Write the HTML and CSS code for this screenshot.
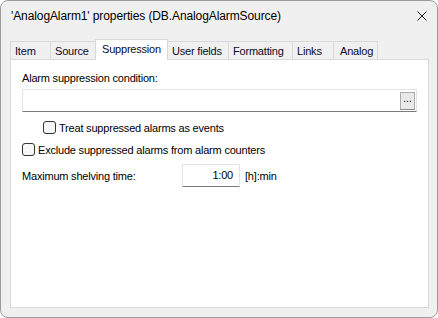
FILE: index.html
```html
<!DOCTYPE html>
<html lang="en">
<head>
  <meta charset="UTF-8" />
  <title>'AnalogAlarm1' properties</title>
  <link rel="stylesheet" href="styles.css">
</head>
<body>
  <div class="window" role="dialog" aria-label="'AnalogAlarm1' properties">

    <!-- Title bar -->
    <div class="titlebar">
      <span class="title">'AnalogAlarm1' properties (DB.AnalogAlarmSource)</span>
      <svg class="close" width="10" height="10" viewBox="0 0 10 10" aria-label="Close">
        <path d="M0.5 0.5 L9.5 9.5 M9.5 0.5 L0.5 9.5" stroke="#1a1a1a" stroke-width="1" fill="none"/>
      </svg>
    </div>

    <!-- Tabs -->
    <div class="tabs">
      <div class="tab tab-item">Item</div>
      <div class="tab tab-source">Source</div>
      <div class="tab active">Suppression</div>
      <div class="tab tab-user">User fields</div>
      <div class="tab tab-format">Formatting</div>
      <div class="tab tab-links">Links</div>
      <div class="tab tab-analog">Analog</div>
    </div>

    <!-- Panel -->
    <div class="panel">
      <div class="label">Alarm suppression condition:</div>
      <div class="field">
        <div class="dots">...</div>
      </div>

      <label class="check indent">
        <span class="box"></span>
        <span>Treat suppressed alarms as events</span>
      </label>
      <label class="check">
        <span class="box"></span>
        <span>Exclude suppressed alarms from alarm counters</span>
      </label>

      <div class="shelving">
        <span class="shelving-label">Maximum shelving time:</span>
        <div class="time">1:00</div>
        <span class="unit">[h]:min</span>
      </div>
    </div>

  </div>
</body>
</html>
```

FILE: styles.css
```css
/* Reset */
* {
  margin: 0; padding: 0; box-sizing: border-box;
}
html, body {
  width: 438px; height: 318px;
  overflow: hidden;
  background: #ffffff;
  font-family: "Liberation Sans", Arial, sans-serif;
  font-size: 11px;
  letter-spacing: -0.2px;
  color: #000;
}

/* Dialog frame */
.window {
  width: 438px;
  height: 318px;
  border: 1px solid #9c9c9c;
  border-radius: 8px;
  background: #f0f0f0;
  display: flex;
  flex-direction: column;
  overflow: hidden;
}

/* Title bar */
.titlebar {
  height: 30px;
  display: flex;
  align-items: center;
  justify-content: space-between;
  padding: 0 10px 0 10px;
}
.title {
  font-size: 12px;
  letter-spacing: -0.1px;
  color: #000;
}
.close {
  display: block;
}

/* Tabs */
.tabs {
  height: 28px;
  display: flex;
  align-items: flex-end;
  padding-left: 9px;
}
.tab {
  height: 18px;
  border: 1px solid #d9d9d9;
  border-bottom: none;
  margin-right: -1px;
  background: #f0f0f0;
  display: flex;
  align-items: center;
  padding-left: 4px;
  white-space: nowrap;
  color: #0a0a28;
}
.tab-item { width: 41px; }
.tab-source { width: 46px; }
.tab-user { width: 62px; }
.tab-format { width: 65px; }
.tab-links { width: 42px; }
.tab-analog { width: 45px; padding-left: 6px; }
.tab.active {
  width: 73px;
  height: 21px;
  background: #fff;
  margin-bottom: -1px;
  padding-left: 6px;
  padding-bottom: 3px;
  position: relative;
  z-index: 1;
}

/* Panel */
.panel {
  flex: 1;
  margin: 0 8px 9px 9px;
  border: 1px solid #d9d9d9;
  background: #fff;
  padding: 10px 11px 0 11px;
  display: flex;
  flex-direction: column;
}

.label {
  height: 17px;
  line-height: 17px;
}

.field {
  margin-top: 2px;
  width: 395px;
  height: 23px;
  border: 1px solid #e3e3e3;
  border-bottom-color: #7a7a7a;
  display: flex;
  align-items: center;
  justify-content: flex-end;
  padding-right: 1px;
}
.dots {
  width: 15px;
  height: 18px;
  border: 1px solid #adadad;
  border-bottom-color: #8a8a8a;
  background: #e9e9e9;
  font-size: 10px;
  letter-spacing: 0;
  line-height: 12px;
  text-align: center;
}

/* Checkboxes */
.check {
  display: flex;
  align-items: center;
  gap: 3px;
  height: 13px;
}
.check.indent {
  margin-top: 9px;
  padding-left: 21px;
}
.check + .check {
  margin-top: 9px;
}
.box {
  width: 13px;
  height: 13px;
  border: 1px solid #333;
  border-radius: 3px;
  background: #f6f6f6;
}

/* Shelving time row */
.shelving {
  margin-top: 8px;
  display: flex;
  align-items: center;
  height: 23px;
}
.shelving-label {
  width: 160px;
}
.time {
  width: 58px;
  height: 23px;
  border: 1px solid #e3e3e3;
  border-bottom-color: #7a7a7a;
  text-align: right;
  padding-right: 6px;
  line-height: 20px;
}
.unit {
  margin-left: 5px;
}
```
